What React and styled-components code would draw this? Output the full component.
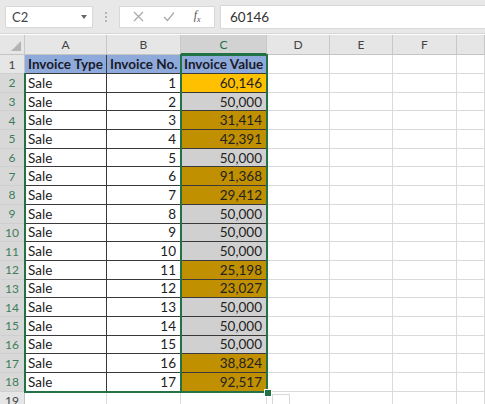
import React from "react";
import { styled, createGlobalStyle } from "styled-components";

/*          STYLES          */
const GlobalStyle = createGlobalStyle`
html, body {
  margin: 0;
  padding: 0;
  background: #ffffff;
  font-family: "Lato", "Liberation Sans", sans-serif;
  overflow: hidden;
}
`

//Formula bar
const Toolbar = styled.div`
display: flex;
align-items: center;
height: 34px;
padding: 0 0 0 5px;
background: #e8e8e8;
box-sizing: border-box;
border-bottom: 1px solid #d6d6d6;
`
const NameBox = styled.div`
display: flex;
align-items: center;
justify-content: space-between;
width: 88px;
height: 22px;
box-sizing: border-box;
padding: 0 5px 0 6px;
background: #fff;
border: 1px solid #d8d8d8;
font-size: 13px;
color: #444;
`
const Caret = styled.span`
width: 0;
height: 0;
border-left: 3.5px solid transparent;
border-right: 3.5px solid transparent;
border-top: 4px solid #666;
`
const Grip = styled.div`
display: flex;
flex-direction: column;
gap: 2px;
margin: 0 12px 0 12px;
& span {
  width: 2px;
  height: 2px;
  background: #b5b5b5;
}
`
const ButtonBox = styled.div`
display: flex;
align-items: center;
justify-content: space-around;
width: 96px;
height: 22px;
box-sizing: border-box;
padding: 0 4px;
background: #fff;
border: 1px solid #d8d8d8;
`
const FxLabel = styled.span`
font-family: "Liberation Serif", serif;
font-style: italic;
font-size: 12px;
color: #555;
`
const FormulaInput = styled.div`
flex: 1;
display: flex;
align-items: center;
height: 22px;
margin-left: 5px;
padding-left: 9px;
background: #fff;
border: 1px solid #d8d8d8;
border-right: none;
font-size: 13.5px;
color: #333;
`

//Sheet
const Sheet = styled.div`
position: relative;
display: grid;
grid-template-columns: 25px 82px 74px 86px 63px 63px 64px 1fr;
grid-template-rows: 20px 19px repeat(17, 18.7px) 19px;
margin-top: 1px;
`
const ColHead = styled.div`
display: flex;
align-items: center;
justify-content: center;
box-sizing: border-box;
background: ${p => (p.$active ? "#d2d2d2" : "#e6e6e6")};
color: ${p => (p.$active ? "#217346" : "#444")};
border-right: 1px solid #c8c8c8;
border-bottom: ${p => (p.$active ? "2px solid #217346" : "1px solid #c4c4c4")};
font-size: 12px;
`
const Corner = styled.div`
position: relative;
background: #e6e6e6;
border-right: 1px solid #c8c8c8;
border-bottom: 1px solid #c4c4c4;
&::after {
  content: "";
  position: absolute;
  right: 3px;
  bottom: 3px;
  border-left: 10px solid transparent;
  border-bottom: 10px solid #b4b4b4;
}
`
const RowHead = styled.div`
display: flex;
align-items: center;
justify-content: center;
box-sizing: border-box;
background: ${p => (p.$active ? "#d8d8d8" : "#e6e6e6")};
color: ${p => (p.$active ? "#3f7d5a" : "#444")};
border-right: 1px solid #c4c4c4;
border-bottom: 1px solid #cfcfcf;
font-size: 12px;
`
const Cell = styled.div`
display: flex;
align-items: center;
justify-content: ${p => (p.$right ? "flex-end" : "flex-start")};
box-sizing: border-box;
padding: 0 4px 0 3px;
background: ${p => p.$fill || "#fff"};
border-right: 1px solid ${p => (p.$table ? "#3a3a3a" : "#dadada")};
border-bottom: 1px solid ${p => (p.$table ? "#3a3a3a" : "#dadada")};
font-size: 13.5px;
font-weight: ${p => (p.$bold ? 700 : 400)};
color: ${p => (p.$bold ? "#1a1a2a" : "#222")};
white-space: nowrap;
overflow: hidden;
`
const Outline = styled.div`
position: absolute;
box-sizing: border-box;
pointer-events: none;
border: 0 solid #217346;
`
const Handle = styled.div`
position: absolute;
left: 264px;
top: 354px;
width: 6px;
height: 6px;
background: #217346;
border: 1px solid #fff;
`
const QuickBadge = styled.div`
position: absolute;
left: 272px;
top: 359px;
width: 18px;
height: 14px;
box-sizing: border-box;
background: #fff;
border: 1px solid #d8d8d8;
`

/*          DATA          */
const GOLD = "#c09000";
const YELLOW = "#ffc000";
const GREY = "#d0d0d0";

const values = [
  ["60,146", YELLOW], ["50,000", GREY], ["31,414", GOLD], ["42,391", GOLD],
  ["50,000", GREY], ["91,368", GOLD], ["29,412", GOLD], ["50,000", GREY],
  ["50,000", GREY], ["50,000", GREY], ["25,198", GOLD], ["23,027", GOLD],
  ["50,000", GREY], ["50,000", GREY], ["50,000", GREY], ["38,824", GOLD],
  ["92,517", GOLD],
];
const columns = ["A", "B", "C", "D", "E", "F", "G"];

/*          COMPONENTS          */
function FormulaBar() {
  return (
    <Toolbar>
      <NameBox>C2<Caret /></NameBox>
      <Grip><span /><span /><span /></Grip>
      <ButtonBox>
        <svg width="11" height="11" viewBox="0 0 11 11">
          <path d="M1 1 L10 10 M10 1 L1 10" stroke="#a8a8a8" strokeWidth="1.2" fill="none" />
        </svg>
        <svg width="12" height="11" viewBox="0 0 12 11">
          <path d="M1 6 L4.5 9.5 L11 1.5" stroke="#a8a8a8" strokeWidth="1.2" fill="none" />
        </svg>
        <FxLabel>f<sub style={{ fontSize: "8px" }}>x</sub></FxLabel>
      </ButtonBox>
      <FormulaInput>60146</FormulaInput>
    </Toolbar>
  );
}

function EmptyCells({ n }) {
  return Array.from({ length: n }, (_, i) => <Cell key={i} />);
}

export default function App() {
  return (
    <>
      <GlobalStyle />
      <FormulaBar />
      <Sheet>
        <Corner />
        {columns.map(c => (
          <ColHead key={c} $active={c === "C"}>{c === "G" ? "" : c}</ColHead>
        ))}

        <RowHead>1</RowHead>
        <Cell $table $bold $fill="#8eaadb">Invoice Type</Cell>
        <Cell $table $bold $fill="#8eaadb">Invoice No.</Cell>
        <Cell $table $bold $fill="#8eaadb">Invoice Value</Cell>
        <EmptyCells n={4} />

        {values.map(([value, fill], i) => (
          <React.Fragment key={i}>
            <RowHead $active>{i + 2}</RowHead>
            <Cell $table>Sale</Cell>
            <Cell $table $right>{i + 1}</Cell>
            <Cell $table $right $fill={fill}>{value}</Cell>
            <EmptyCells n={4} />
          </React.Fragment>
        ))}

        <RowHead>19</RowHead>
        <EmptyCells n={7} />

        <Outline style={{ left: 180, top: 19, width: 88, height: 339, borderWidth: 2 }} />
        <Outline style={{ left: 24, top: 38, width: 158, height: 320, borderLeftWidth: 2, borderBottomWidth: 2 }} />
        <Handle />
        <QuickBadge />
      </Sheet>
    </>
  );
}
